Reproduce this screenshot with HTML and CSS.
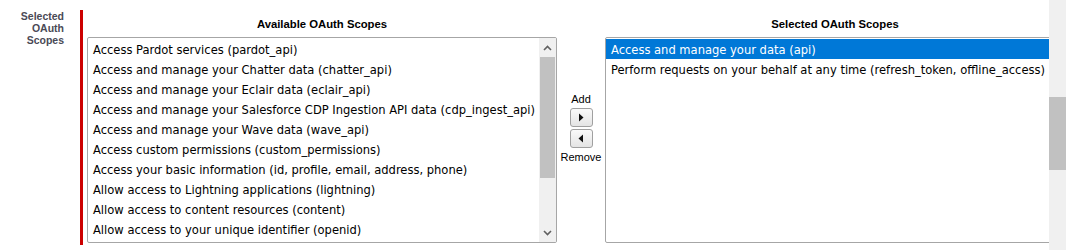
FILE: index.html
```html
<!DOCTYPE html>
<html>
<head>
<meta charset="utf-8">
<link rel="stylesheet" href="styles.css">
</head>
<body>
<div class="page">
  <div class="main">
    <div class="label-col">Selected<br>OAuth<br>Scopes</div>
    <div class="field">
      <div class="block block-left">
        <div class="hdr">Available OAuth Scopes</div>
        <div class="list list-left">
          <div class="rows">
            <div class="row">Access Pardot services (pardot_api)</div>
            <div class="row">Access and manage your Chatter data (chatter_api)</div>
            <div class="row">Access and manage your Eclair data (eclair_api)</div>
            <div class="row">Access and manage your Salesforce CDP Ingestion API data (cdp_ingest_api)</div>
            <div class="row">Access and manage your Wave data (wave_api)</div>
            <div class="row">Access custom permissions (custom_permissions)</div>
            <div class="row">Access your basic information (id, profile, email, address, phone)</div>
            <div class="row">Allow access to Lightning applications (lightning)</div>
            <div class="row">Allow access to content resources (content)</div>
            <div class="row">Allow access to your unique identifier (openid)</div>
          </div>
          <div class="sbar">
            <div class="arrow">
              <svg width="9" height="6" viewBox="0 0 9 6"><path d="M1 5 L4.5 1.5 L8 5" fill="none" stroke="#606060" stroke-width="1.6"/></svg>
            </div>
            <div class="thumb"></div>
            <div class="track"></div>
            <div class="arrow">
              <svg width="9" height="6" viewBox="0 0 9 6"><path d="M1 1 L4.5 4.5 L8 1" fill="none" stroke="#606060" stroke-width="1.6"/></svg>
            </div>
          </div>
        </div>
      </div>
      <div class="btns">
        <div class="btn-label">Add</div>
        <div class="btn"><svg width="6" height="9" viewBox="0 0 6 9"><path d="M1 0.5 L5.5 4.5 L1 8.5 Z" fill="#111"/></svg></div>
        <div class="btn"><svg width="6" height="9" viewBox="0 0 6 9"><path d="M5 0.5 L0.5 4.5 L5 8.5 Z" fill="#111"/></svg></div>
        <div class="btn-label">Remove</div>
      </div>
      <div class="block block-right">
        <div class="hdr">Selected OAuth Scopes</div>
        <div class="list list-right">
          <div class="rows">
            <div class="row sel">Access and manage your data (api)</div>
            <div class="row">Perform requests on your behalf at any time (refresh_token, offline_access)</div>
          </div>
        </div>
      </div>
    </div>
  </div>
  <div class="page-sbar">
    <div class="page-thumb"></div>
  </div>
</div>
</body>
</html>
```
FILE: styles.css
```css
html, body {
  margin: 0;
  padding: 0;
  background: #fff;
}
.page {
  display: flex;
  width: 1066px;
  height: 250px;
  overflow: hidden;
}
.main {
  flex: 1;
  display: flex;
  overflow: hidden;
  min-width: 0;
}
.label-col {
  width: 64px;
  flex: none;
  text-align: right;
  font-family: "Liberation Sans", Arial, sans-serif;
  font-weight: bold;
  font-size: 10.5px;
  line-height: 12px;
  color: #4a4a56;
  padding-top: 10px;
}
.field {
  flex: none;
  display: flex;
  margin-left: 16px;
  margin-top: 10px;
  height: 235px;
  border-left: 3px solid #c00;
  padding-left: 4px;
}
.block {
  flex: none;
  display: flex;
  flex-direction: column;
}
.block-left { width: 470px; }
.block-right { width: 460px; }
.hdr {
  height: 27px;
  box-sizing: border-box;
  padding-top: 8px;
  text-align: center;
  font-family: "Liberation Sans", Arial, sans-serif;
  font-weight: bold;
  font-size: 11.3px;
  line-height: 13px;
  color: #000;
}
.list {
  height: 206px;
  box-sizing: border-box;
  border: 1px solid #a6a6a6;
  border-radius: 2px;
  display: flex;
  overflow: hidden;
  background: #fff;
}
.rows {
  flex: 1;
  min-width: 0;
  padding-top: 1px;
}
.row {
  height: 20px;
  line-height: 22px;
  overflow: hidden;
  padding-left: 5px;
  font-family: "DejaVu Sans Condensed", "DejaVu Sans", sans-serif;
  font-stretch: condensed;
  font-size: 12.8px;
  color: #000;
  white-space: nowrap;
}
.row.sel {
  background: #0078d7;
  color: #fff;
}
.sbar {
  width: 17px;
  flex: none;
  background: #f0f0f0;
  display: flex;
  flex-direction: column;
}
.arrow {
  height: 19px;
  flex: none;
  display: flex;
  align-items: center;
  justify-content: center;
}
.thumb {
  height: 121px;
  margin: 0 1px;
  background: #c1c1c1;
  flex: none;
}
.track { flex: 1; }
.btns {
  width: 48px;
  flex: none;
  display: flex;
  flex-direction: column;
  align-items: center;
  padding-top: 83px;
  box-sizing: border-box;
}
.btn-label {
  font-family: "Liberation Sans", Arial, sans-serif;
  font-size: 11px;
  line-height: 13px;
  color: #000;
}
.btn {
  width: 23px;
  height: 19px;
  box-sizing: border-box;
  border: 1px solid #a0a0a0;
  border-radius: 3px;
  background: linear-gradient(#fafafa, #e4e4e4);
  display: flex;
  align-items: center;
  justify-content: center;
  margin: 2px 0 1px;
}
.btn + .btn { margin-top: 1px; margin-bottom: 3px; }
.page-sbar {
  width: 17px;
  flex: none;
  background: #f0f0f0;
  display: flex;
  flex-direction: column;
}
.page-thumb {
  margin-top: 97px;
  height: 73px;
  background: #c1c1c1;
}
```
